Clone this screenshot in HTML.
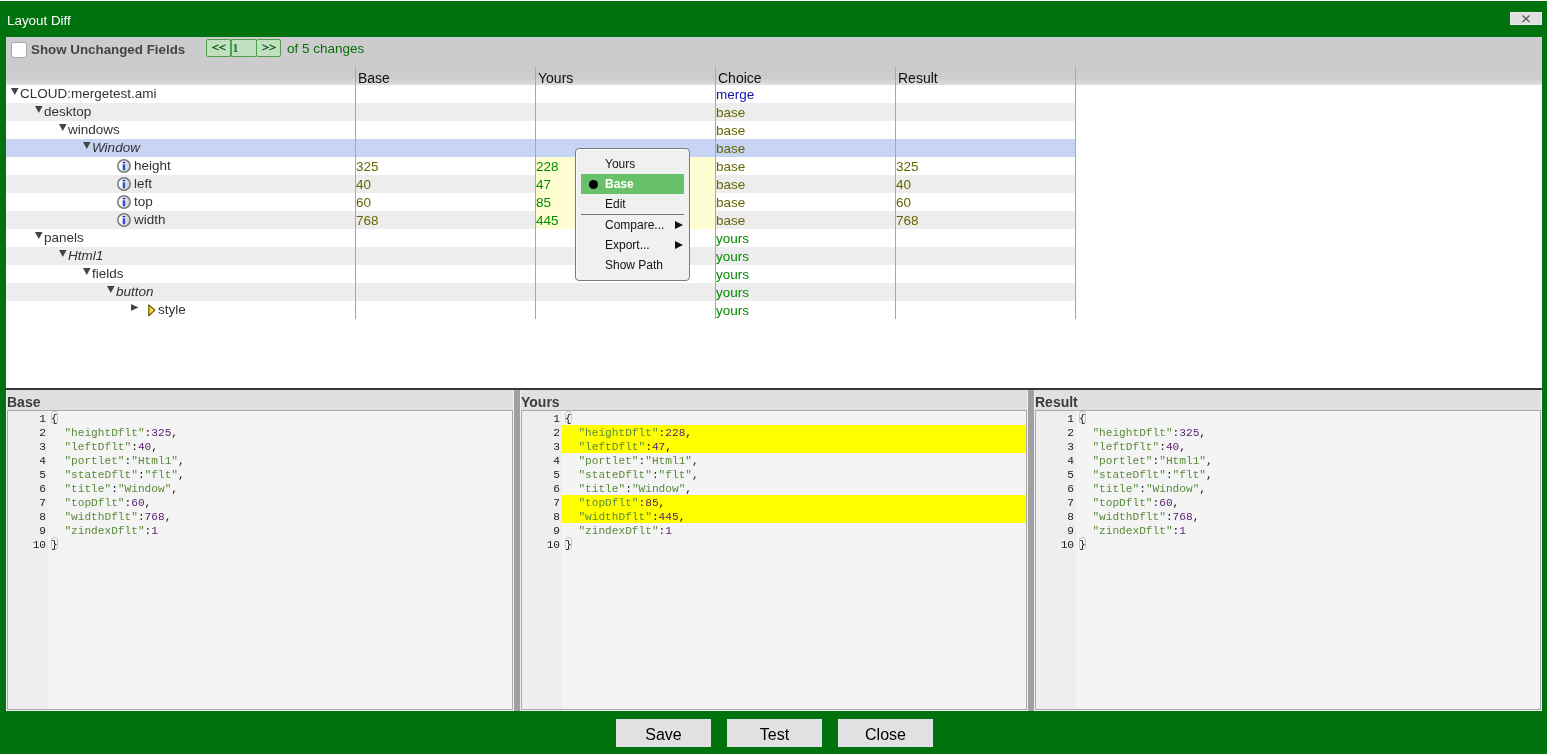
<!DOCTYPE html>
<html><head><meta charset="utf-8">
<style>
*{box-sizing:border-box;margin:0;padding:0}
html,body{width:1547px;height:754px;overflow:hidden}
body{background:#00730e;font-family:"Liberation Sans",sans-serif;position:relative;font-size:13px;color:#333}
div{position:absolute}
.t{white-space:nowrap}
#topline{left:0;top:0;width:1547px;height:1px;background:#fcfefc;box-shadow:0 1px 0 #006a06}
#title{left:7px;top:13px;color:#fff;font-size:13.4px;line-height:16px}
#xbtn{left:1510px;top:12px;width:32px;height:13px;background:#e0e0e0;border:1px solid #ece6ec}
#main{left:6px;top:37px;width:1536px;height:674px;background:#fff}
#toolbar{left:6px;top:37px;width:1536px;height:30px;background:#cccccc}
#hdr{left:6px;top:67px;width:1536px;height:18px;background:linear-gradient(#cccccc 0,#cccccc 11px,#dedede 18px)}
.colh{top:69px;height:18px;color:#111;font-size:14px;line-height:18px;padding-left:3px}
.row{left:6px;width:1069px;height:18px}
.alt{background:#ededed}
.sel{background:#c8d4f4}
.lbl{font-size:13.5px;line-height:18px;color:#333}
.val{font-size:13.5px;line-height:18px;margin-top:1px}
.vline{top:67px;width:1px;height:252px;background:#a8a8a8}
.tri{width:0;height:0;border-left:3.5px solid transparent;border-right:3.5px solid transparent;border-top:7px solid #444}
.trir{width:0;height:0;border-top:3.5px solid transparent;border-bottom:3.5px solid transparent;border-left:7px solid #444}
.info{width:14px;height:14px;border-radius:50%;border:1px solid #8a8a8a;background:radial-gradient(circle at 40% 35%,#ffffff 0,#f0f0f0 40%,#c8c8c8 100%)}
.info:after{content:"";position:absolute;left:5px;top:4px;width:2px;height:7px;background:#2a50c8}
.info:before{content:"";position:absolute;left:5px;top:1px;width:2px;height:2px;background:#2a50c8}
.yel{background:#fffdd2}
.cmenu{left:575px;top:148px;width:115px;height:133px;background:#f0f0f0;border:1px solid #7a7a7a;border-radius:4px;box-shadow:inset 1px 1px 0 #fafafa}
.mi{font-size:12px;line-height:20px;color:#111}
.panel-h{top:390px;height:321px;background:#e0e0e0;border:1px solid #f4eff4;border-top:0}
.ph-t{font-size:14px;font-weight:bold;color:#3c3c3c;line-height:16px}
.code{top:410px;height:300px;background:#f4f4f4;border:1px solid #a8a8a8;box-shadow:inset 1px 1px 0 #fafafa}
.gut{background:#eeeeee}
.ln{font-family:"Liberation Mono",monospace;font-size:11.15px;line-height:14px;color:#222;text-align:right}
.cl{font-family:"Liberation Mono",monospace;font-size:11.15px;line-height:14px;color:#111;white-space:pre}
.s{color:#5a8a3a}
.n{color:#581a70}
.hl{background:#ffff00}
.btn{top:719px;width:95px;height:28px;background:#e1e1e1;font-size:16px;line-height:32px;text-align:center;color:#000}
</style></head><body><div id="wrap" style="left:0;top:0;width:1547px;height:754px;will-change:transform">
<svg width="0" height="0" style="position:absolute"><defs><linearGradient id="ig" x1="0" x2="1"><stop offset="0" stop-color="#ffffff"/><stop offset="0.5" stop-color="#f2f2f2"/><stop offset="1" stop-color="#c4c4c4"/></linearGradient></defs></svg>
<div id="topline"></div>
<div id="title" class="t">Layout Diff</div>
<div id="xbtn"><svg width="30" height="11" style="position:absolute;left:0;top:0"><path d="M11.5 2.5 L18.5 9 M18.5 2.5 L11.5 9" stroke="#555" stroke-width="1.2"/></svg></div>
<div id="main"></div>
<div id="toolbar"></div>
<div id="hdr"></div>

<div style="left:11px;top:42px;width:16px;height:16px;background:#fff;border:1px solid #a4a4a4;border-radius:2.5px"></div>
<div class="t" style="left:31px;top:42px;font-size:13.35px;line-height:16px;font-weight:bold;color:#444">Show Unchanged Fields</div>
<div style="left:206px;top:39px;width:25px;height:18px;background:#c0e0c0;border:1px solid #4e9e4e;border-radius:2px"></div>
<div style="left:230px;top:39px;width:27px;height:18px;background:#c0e0c0;border:1px solid #4e9e4e;border-left-width:2px;border-radius:2px"></div>
<div style="left:256px;top:39px;width:25px;height:18px;background:#c0e0c0;border:1px solid #4e9e4e;border-radius:2px"></div>
<svg style="position:absolute;left:206px;top:39px" width="75" height="18"><path d="M12.2 6 L6.8 8.4 L12.2 10.8 M19.2 6 L13.8 8.4 L19.2 10.8 M56.8 6 L62.2 8.4 L56.8 10.8 M63.8 6 L69.2 8.4 L63.8 10.8" fill="none" stroke="#0c5c0c" stroke-width="1.05" stroke-linecap="round"/></svg>
<div class="t" style="left:232px;top:40px;font-family:'Liberation Serif',serif;font-weight:bold;font-size:13.5px;line-height:16px;color:#2e7e2e">1</div>
<div class="t" style="left:287px;top:41px;font-size:13.5px;line-height:16px;color:#0a6e0a">of 5 changes</div>

<div class="colh t" style="left:355px">Base</div>
<div class="colh t" style="left:535px">Yours</div>
<div class="colh t" style="left:715px">Choice</div>
<div class="colh t" style="left:895px">Result</div>
<div class="row" style="top:85px"></div>
<svg style="position:absolute;left:11px;top:88px" width="8" height="8"><path d="M0 0 L7.6 0 L3.8 7 Z" fill="#444"/></svg>
<div class="lbl t" style="left:20px;top:85px;">CLOUD:mergetest.ami</div>
<div class="val t" style="left:716px;top:85px;color:#1212b0">merge</div>
<div class="row alt" style="top:103px"></div>
<svg style="position:absolute;left:35px;top:106px" width="8" height="8"><path d="M0 0 L7.6 0 L3.8 7 Z" fill="#444"/></svg>
<div class="lbl t" style="left:44px;top:103px;">desktop</div>
<div class="val t" style="left:716px;top:103px;color:#666600">base</div>
<div class="row" style="top:121px"></div>
<svg style="position:absolute;left:59px;top:124px" width="8" height="8"><path d="M0 0 L7.6 0 L3.8 7 Z" fill="#444"/></svg>
<div class="lbl t" style="left:68px;top:121px;">windows</div>
<div class="val t" style="left:716px;top:121px;color:#666600">base</div>
<div class="row sel" style="top:139px"></div>
<svg style="position:absolute;left:83px;top:142px" width="8" height="8"><path d="M0 0 L7.6 0 L3.8 7 Z" fill="#444"/></svg>
<div class="lbl t" style="left:92px;top:139px;font-style:italic;">Window</div>
<div class="val t" style="left:716px;top:139px;color:#666600">base</div>
<div class="row" style="top:157px"></div>
<svg style="position:absolute;left:117px;top:158px" width="15" height="15"><circle cx="7" cy="8" r="6.2" fill="url(#ig)" stroke="#7a7a7a" stroke-width="1.5"/><rect x="5.7" y="6.3" width="2.5" height="6" fill="#2a50d0"/><rect x="5.7" y="3.9" width="2.5" height="1.3" fill="#0a1e9a"/></svg>
<div class="lbl t" style="left:134px;top:157px;">height</div>
<div class="yel" style="left:536px;top:157px;width:179px;height:18px"></div>
<div class="val t" style="left:356px;top:157px;color:#666600">325</div>
<div class="val t" style="left:536px;top:157px;color:#008c00">228</div>
<div class="val t" style="left:716px;top:157px;color:#666600">base</div>
<div class="val t" style="left:896px;top:157px;color:#666600">325</div>
<div class="row alt" style="top:175px"></div>
<svg style="position:absolute;left:117px;top:176px" width="15" height="15"><circle cx="7" cy="8" r="6.2" fill="url(#ig)" stroke="#7a7a7a" stroke-width="1.5"/><rect x="5.7" y="6.3" width="2.5" height="6" fill="#2a50d0"/><rect x="5.7" y="3.9" width="2.5" height="1.3" fill="#0a1e9a"/></svg>
<div class="lbl t" style="left:134px;top:175px;">left</div>
<div class="yel" style="left:536px;top:175px;width:179px;height:18px"></div>
<div class="val t" style="left:356px;top:175px;color:#666600">40</div>
<div class="val t" style="left:536px;top:175px;color:#008c00">47</div>
<div class="val t" style="left:716px;top:175px;color:#666600">base</div>
<div class="val t" style="left:896px;top:175px;color:#666600">40</div>
<div class="row" style="top:193px"></div>
<svg style="position:absolute;left:117px;top:194px" width="15" height="15"><circle cx="7" cy="8" r="6.2" fill="url(#ig)" stroke="#7a7a7a" stroke-width="1.5"/><rect x="5.7" y="6.3" width="2.5" height="6" fill="#2a50d0"/><rect x="5.7" y="3.9" width="2.5" height="1.3" fill="#0a1e9a"/></svg>
<div class="lbl t" style="left:134px;top:193px;">top</div>
<div class="yel" style="left:536px;top:193px;width:179px;height:18px"></div>
<div class="val t" style="left:356px;top:193px;color:#666600">60</div>
<div class="val t" style="left:536px;top:193px;color:#008c00">85</div>
<div class="val t" style="left:716px;top:193px;color:#666600">base</div>
<div class="val t" style="left:896px;top:193px;color:#666600">60</div>
<div class="row alt" style="top:211px"></div>
<svg style="position:absolute;left:117px;top:212px" width="15" height="15"><circle cx="7" cy="8" r="6.2" fill="url(#ig)" stroke="#7a7a7a" stroke-width="1.5"/><rect x="5.7" y="6.3" width="2.5" height="6" fill="#2a50d0"/><rect x="5.7" y="3.9" width="2.5" height="1.3" fill="#0a1e9a"/></svg>
<div class="lbl t" style="left:134px;top:211px;">width</div>
<div class="yel" style="left:536px;top:211px;width:179px;height:18px"></div>
<div class="val t" style="left:356px;top:211px;color:#666600">768</div>
<div class="val t" style="left:536px;top:211px;color:#008c00">445</div>
<div class="val t" style="left:716px;top:211px;color:#666600">base</div>
<div class="val t" style="left:896px;top:211px;color:#666600">768</div>
<div class="row" style="top:229px"></div>
<svg style="position:absolute;left:35px;top:232px" width="8" height="8"><path d="M0 0 L7.6 0 L3.8 7 Z" fill="#444"/></svg>
<div class="lbl t" style="left:44px;top:229px;">panels</div>
<div class="val t" style="left:716px;top:229px;color:#008c00">yours</div>
<div class="row alt" style="top:247px"></div>
<svg style="position:absolute;left:59px;top:250px" width="8" height="8"><path d="M0 0 L7.6 0 L3.8 7 Z" fill="#444"/></svg>
<div class="lbl t" style="left:68px;top:247px;font-style:italic;">Html1</div>
<div class="val t" style="left:716px;top:247px;color:#008c00">yours</div>
<div class="row" style="top:265px"></div>
<svg style="position:absolute;left:83px;top:268px" width="8" height="8"><path d="M0 0 L7.6 0 L3.8 7 Z" fill="#444"/></svg>
<div class="lbl t" style="left:92px;top:265px;">fields</div>
<div class="val t" style="left:716px;top:265px;color:#008c00">yours</div>
<div class="row alt" style="top:283px"></div>
<svg style="position:absolute;left:107px;top:286px" width="8" height="8"><path d="M0 0 L7.6 0 L3.8 7 Z" fill="#444"/></svg>
<div class="lbl t" style="left:116px;top:283px;font-style:italic;">button</div>
<div class="val t" style="left:716px;top:283px;color:#008c00">yours</div>
<div class="row" style="top:301px"></div>
<svg style="position:absolute;left:131px;top:304px" width="8" height="8"><path d="M0 0 L7.5 3.4 L0 6.8 Z" fill="#444"/></svg>
<svg style="position:absolute;left:148px;top:304px" width="8" height="13"><defs><linearGradient id="yg" x1="0" x2="1"><stop offset="0" stop-color="#ffcc10"/><stop offset="1" stop-color="#fff460"/></linearGradient></defs><path d="M0.8 0.8 L6.8 6.2 L0.8 11.8 Z" fill="url(#yg)" stroke="#5a4800" stroke-width="1.1" stroke-linejoin="round"/></svg>
<div class="lbl t" style="left:158px;top:301px;">style</div>
<div class="val t" style="left:716px;top:301px;color:#008c00">yours</div>
<div class="vline" style="left:355px"></div>
<div class="vline" style="left:535px"></div>
<div class="vline" style="left:715px"></div>
<div class="vline" style="left:895px"></div>
<div class="vline" style="left:1075px"></div>
<div class="cmenu"></div>
<div style="left:581px;top:174px;width:103px;height:20px;background:#68c068"></div>
<div style="left:589px;top:180px;width:9px;height:9px;border-radius:50%;background:#000"></div>
<div style="left:581px;top:214px;width:103px;height:1px;background:#777"></div>
<div class="mi t" style="left:605px;top:154px;">Yours</div>
<div class="mi t" style="left:605px;top:174px;color:#fff;font-weight:bold;">Base</div>
<div class="mi t" style="left:605px;top:194px;">Edit</div>
<div class="mi t" style="left:605px;top:215px;">Compare...</div>
<div class="mi t" style="left:605px;top:235px;">Export...</div>
<div class="mi t" style="left:605px;top:255px;">Show Path</div>
<div style="left:675px;top:221px;width:0;height:0;border-top:4px solid transparent;border-bottom:4px solid transparent;border-left:8px solid #111"></div>
<div style="left:675px;top:241px;width:0;height:0;border-top:4px solid transparent;border-bottom:4px solid transparent;border-left:8px solid #111"></div>
<div style="left:6px;top:388px;width:1536px;height:2px;background:#363636"></div>
<div style="left:514px;top:390px;width:6px;height:321px;background:#a0a0a0"></div>
<div style="left:1028px;top:390px;width:6px;height:321px;background:#a0a0a0"></div>
<div class="panel-h" style="left:6px;width:508px"></div>
<div class="ph-t t" style="left:7px;top:394px">Base</div>
<div class="code" style="left:7px;width:506px;overflow:hidden">
<div class="gut" style="left:0;top:0;width:40px;height:298px"></div>
<div class="ln" style="left:0;top:0.5px;width:38px">1</div>
<div style="left:43px;top:0px;width:7px;height:13px;border:1px solid #c4c4c4;border-radius:3px;box-shadow:inset 1px 0 0 #fff"></div>
<div class="cl" style="left:43px;top:1px">{</div>
<div class="ln" style="left:0;top:14.5px;width:38px">2</div>
<div class="cl" style="left:43px;top:15px">  <span class="s">"heightDflt"</span>:<span class="n">325</span>,</div>
<div class="ln" style="left:0;top:28.5px;width:38px">3</div>
<div class="cl" style="left:43px;top:29px">  <span class="s">"leftDflt"</span>:<span class="n">40</span>,</div>
<div class="ln" style="left:0;top:42.5px;width:38px">4</div>
<div class="cl" style="left:43px;top:43px">  <span class="s">"portlet"</span>:<span class="s">"Html1"</span>,</div>
<div class="ln" style="left:0;top:56.5px;width:38px">5</div>
<div class="cl" style="left:43px;top:57px">  <span class="s">"stateDflt"</span>:<span class="s">"flt"</span>,</div>
<div class="ln" style="left:0;top:70.5px;width:38px">6</div>
<div class="cl" style="left:43px;top:71px">  <span class="s">"title"</span>:<span class="s">"Window"</span>,</div>
<div class="ln" style="left:0;top:84.5px;width:38px">7</div>
<div class="cl" style="left:43px;top:85px">  <span class="s">"topDflt"</span>:<span class="n">60</span>,</div>
<div class="ln" style="left:0;top:98.5px;width:38px">8</div>
<div class="cl" style="left:43px;top:99px">  <span class="s">"widthDflt"</span>:<span class="n">768</span>,</div>
<div class="ln" style="left:0;top:112.5px;width:38px">9</div>
<div class="cl" style="left:43px;top:113px">  <span class="s">"zindexDflt"</span>:<span class="n">1</span></div>
<div class="ln" style="left:0;top:126.5px;width:38px">10</div>
<div style="left:43px;top:126px;width:7px;height:13px;border:1px solid #c4c4c4;border-radius:3px;box-shadow:inset 1px 0 0 #fff"></div>
<div class="cl" style="left:43px;top:127px">}</div>
</div>
<div class="panel-h" style="left:520px;width:508px"></div>
<div class="ph-t t" style="left:521px;top:394px">Yours</div>
<div class="code" style="left:521px;width:506px;overflow:hidden">
<div class="gut" style="left:0;top:0;width:40px;height:298px"></div>
<div class="ln" style="left:0;top:0.5px;width:38px">1</div>
<div style="left:43px;top:0px;width:7px;height:13px;border:1px solid #c4c4c4;border-radius:3px;box-shadow:inset 1px 0 0 #fff"></div>
<div class="cl" style="left:43px;top:1px">{</div>
<div class="hl" style="left:40px;top:14px;width:470px;height:14px"></div>
<div class="ln" style="left:0;top:14.5px;width:38px">2</div>
<div class="cl" style="left:43px;top:15px">  <span class="s">"heightDflt"</span>:<span class="n">228</span>,</div>
<div class="hl" style="left:40px;top:28px;width:470px;height:14px"></div>
<div class="ln" style="left:0;top:28.5px;width:38px">3</div>
<div class="cl" style="left:43px;top:29px">  <span class="s">"leftDflt"</span>:<span class="n">47</span>,</div>
<div class="ln" style="left:0;top:42.5px;width:38px">4</div>
<div class="cl" style="left:43px;top:43px">  <span class="s">"portlet"</span>:<span class="s">"Html1"</span>,</div>
<div class="ln" style="left:0;top:56.5px;width:38px">5</div>
<div class="cl" style="left:43px;top:57px">  <span class="s">"stateDflt"</span>:<span class="s">"flt"</span>,</div>
<div class="ln" style="left:0;top:70.5px;width:38px">6</div>
<div class="cl" style="left:43px;top:71px">  <span class="s">"title"</span>:<span class="s">"Window"</span>,</div>
<div class="hl" style="left:40px;top:84px;width:470px;height:14px"></div>
<div class="ln" style="left:0;top:84.5px;width:38px">7</div>
<div class="cl" style="left:43px;top:85px">  <span class="s">"topDflt"</span>:<span class="n">85</span>,</div>
<div class="hl" style="left:40px;top:98px;width:470px;height:14px"></div>
<div class="ln" style="left:0;top:98.5px;width:38px">8</div>
<div class="cl" style="left:43px;top:99px">  <span class="s">"widthDflt"</span>:<span class="n">445</span>,</div>
<div class="ln" style="left:0;top:112.5px;width:38px">9</div>
<div class="cl" style="left:43px;top:113px">  <span class="s">"zindexDflt"</span>:<span class="n">1</span></div>
<div class="ln" style="left:0;top:126.5px;width:38px">10</div>
<div style="left:43px;top:126px;width:7px;height:13px;border:1px solid #c4c4c4;border-radius:3px;box-shadow:inset 1px 0 0 #fff"></div>
<div class="cl" style="left:43px;top:127px">}</div>
</div>
<div class="panel-h" style="left:1034px;width:508px"></div>
<div class="ph-t t" style="left:1035px;top:394px">Result</div>
<div class="code" style="left:1035px;width:506px;overflow:hidden">
<div class="gut" style="left:0;top:0;width:40px;height:298px"></div>
<div class="ln" style="left:0;top:0.5px;width:38px">1</div>
<div style="left:43px;top:0px;width:7px;height:13px;border:1px solid #c4c4c4;border-radius:3px;box-shadow:inset 1px 0 0 #fff"></div>
<div class="cl" style="left:43px;top:1px">{</div>
<div class="ln" style="left:0;top:14.5px;width:38px">2</div>
<div class="cl" style="left:43px;top:15px">  <span class="s">"heightDflt"</span>:<span class="n">325</span>,</div>
<div class="ln" style="left:0;top:28.5px;width:38px">3</div>
<div class="cl" style="left:43px;top:29px">  <span class="s">"leftDflt"</span>:<span class="n">40</span>,</div>
<div class="ln" style="left:0;top:42.5px;width:38px">4</div>
<div class="cl" style="left:43px;top:43px">  <span class="s">"portlet"</span>:<span class="s">"Html1"</span>,</div>
<div class="ln" style="left:0;top:56.5px;width:38px">5</div>
<div class="cl" style="left:43px;top:57px">  <span class="s">"stateDflt"</span>:<span class="s">"flt"</span>,</div>
<div class="ln" style="left:0;top:70.5px;width:38px">6</div>
<div class="cl" style="left:43px;top:71px">  <span class="s">"title"</span>:<span class="s">"Window"</span>,</div>
<div class="ln" style="left:0;top:84.5px;width:38px">7</div>
<div class="cl" style="left:43px;top:85px">  <span class="s">"topDflt"</span>:<span class="n">60</span>,</div>
<div class="ln" style="left:0;top:98.5px;width:38px">8</div>
<div class="cl" style="left:43px;top:99px">  <span class="s">"widthDflt"</span>:<span class="n">768</span>,</div>
<div class="ln" style="left:0;top:112.5px;width:38px">9</div>
<div class="cl" style="left:43px;top:113px">  <span class="s">"zindexDflt"</span>:<span class="n">1</span></div>
<div class="ln" style="left:0;top:126.5px;width:38px">10</div>
<div style="left:43px;top:126px;width:7px;height:13px;border:1px solid #c4c4c4;border-radius:3px;box-shadow:inset 1px 0 0 #fff"></div>
<div class="cl" style="left:43px;top:127px">}</div>
</div>
<div class="btn" style="left:616px">Save</div>
<div class="btn" style="left:727px">Test</div>
<div class="btn" style="left:838px">Close</div>
</div></body></html>
